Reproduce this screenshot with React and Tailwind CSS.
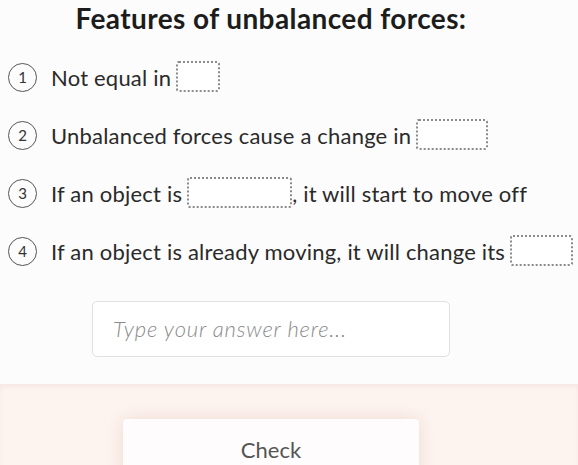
const rows = [
    { n: 1, before: "Not equal in", box: 44, after: "" },
    { n: 2, before: "Unbalanced forces cause a change in", box: 72, after: "" },
    { n: 3, before: "If an object is", box: 105, after: ", it will start to move off" },
    { n: 4, before: "If an object is already moving, it will change its", box: 63, after: "" },
];

const App = () => {
    return (
        <div className="w-full h-screen overflow-hidden bg-[#fcfcfc] flex flex-col" style={{ fontFamily: "Lato, 'Open Sans', sans-serif" }}>
            <div className="h-[384px] shrink-0">
                <div className="w-[542px] flex flex-col">
                    <h1 className="pt-[2px] text-center text-[28px] leading-[1.2] font-bold tracking-[0.4px] text-[#1c1c1c]">
                        Features of unbalanced forces:
                    </h1>

                    <div className="mt-[13px] flex flex-col">
                        {rows.map((row) => (
                            <div key={row.n} className="h-[58px] flex items-center whitespace-nowrap text-[22px] tracking-[0.2px] text-[#2a2a2a]">
                                <span className="ml-2 mr-[14px] w-[29px] h-[29px] shrink-0 rounded-full border-[1.5px] border-[#555] flex items-center justify-center text-[15px] tracking-normal text-[#333]">
                                    {row.n}
                                </span>
                                <span>{row.before}</span>
                                <span
                                    className="ml-[5px] mb-[2px] h-[31px] shrink-0 border-2 border-dotted border-[#8a8a8a] rounded-[3px] bg-white"
                                    style={{ width: row.box }}
                                />
                                {row.after && <span>{row.after}</span>}
                            </div>
                        ))}
                    </div>

                    <input
                        type="text"
                        placeholder="Type your answer here..."
                        className="mt-[20px] mx-auto w-[358px] h-[56px] pl-[20px] rounded-[5px] border border-[#e0e0e0] bg-white text-[22px] tracking-[0.8px] outline-none placeholder:italic placeholder:font-light placeholder:text-[#8a8a8a]"
                    />
                </div>
            </div>

            <div className="flex-1 bg-[#fdf4f0] shadow-[inset_0_3px_4px_rgba(230,200,190,0.25)]">
                <div className="w-[542px] pt-[35px] flex justify-center">
                    <button className="w-[296px] h-[60px] rounded-t-[4px] bg-[#fefcfc] shadow-[0_0_18px_rgba(215,170,150,0.35)] text-[22px] text-[#555] flex items-center justify-center">
                        Check
                    </button>
                </div>
            </div>
        </div>
    );
};

export default App;
